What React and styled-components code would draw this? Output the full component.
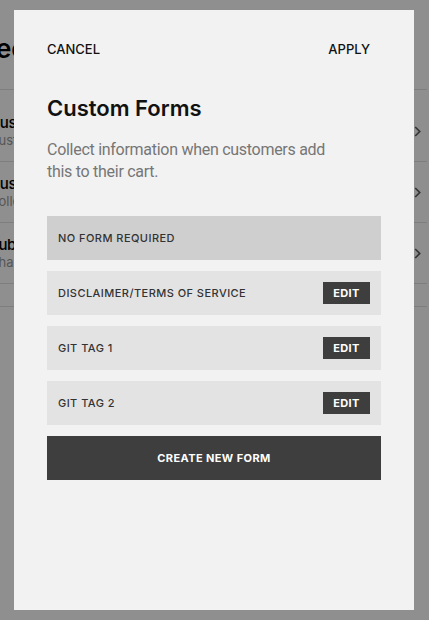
import React from 'react';
import styled, {createGlobalStyle} from 'styled-components';

const GlobalStyle = createGlobalStyle`
  html, body {
    margin: 0;
    padding: 0;
    background: #fff;
    overflow: hidden;
  }
  body {
    font-family: Inter, "Liberation Sans", sans-serif;
    -webkit-font-smoothing: antialiased;
  }
  * { box-sizing: border-box; }
`;

const forms = [
    {id: 'none', label: 'No form required', selected: true},
    {id: 'terms', label: 'Disclaimer/Terms of Service'},
    {id: 'tag1', label: 'Git Tag 1'},
    {id: 'tag2', label: 'Git Tag 2'},
];

const settings = [
    {title: 'Custom Forms', note: 'Customize what buyers tell you'},
    {title: 'Customer Notes', note: 'Collect extra details'},
    {title: 'Subscriptions', note: 'Charge on a schedule'},
];

function Chevron() {
    return (
        <svg width="7" height="11" viewBox="0 0 7 11" fill="none">
            <path d="M1.2 1l4.5 4.5-4.5 4.5" stroke="#5e5e5e" strokeWidth="1.7" />
        </svg>
    );
}

export default function App() {
    return (
        <React.Fragment>
            <GlobalStyle />
            <Page>
                <PageHeader>
                    <PageTitle>Sections</PageTitle>
                </PageHeader>
                <SettingsList>
                    {settings.map((s) => (
                        <SettingRow key={s.title}>
                            <SettingText>
                                <SettingTitle>{s.title}</SettingTitle>
                                <SettingNote>{s.note}</SettingNote>
                            </SettingText>
                            <Chevron />
                        </SettingRow>
                    ))}
                    <Divider />
                </SettingsList>
            </Page>

            <Overlay>
                <Modal>
                    <ModalBar>
                        <BarButton>Cancel</BarButton>
                        <BarButton>Apply</BarButton>
                    </ModalBar>

                    <Title>Custom Forms</Title>
                    <Lead>Collect information when customers add this to their cart.</Lead>

                    <FormList>
                        {forms.map((f) => (
                            <FormRow key={f.id} selected={f.selected}>
                                <FormLabel>{f.label}</FormLabel>
                                {!f.selected && <EditButton>Edit</EditButton>}
                            </FormRow>
                        ))}
                        <CreateButton>Create New Form</CreateButton>
                    </FormList>
                </Modal>
            </Overlay>
        </React.Fragment>
    );
}

/* page behind the dialog */
const Page = styled.div`
    margin: 0 2px 0 -11px;
    color: #000;
`;

const PageHeader = styled.div`
    height: 90px;
    padding-top: 33px;
    border-bottom: 1px solid #e0e0e0;
`;

const PageTitle = styled.h1`
    margin: 0 0 0 -10px;
    font-size: 26px;
    line-height: 32px;
    font-weight: 600;
`;

const SettingsList = styled.div`
    padding-top: 11px;
`;

const SettingRow = styled.div`
    display: flex;
    align-items: center;
    justify-content: space-between;
    height: 61px;
    padding: 0 6px 0 0;
    border-bottom: 1px solid #e0e0e0;
`;

const SettingText = styled.div`
    display: flex;
    flex-direction: column;
`;

const SettingTitle = styled.span`
    font-size: 15px;
    line-height: 18px;
    font-weight: 500;
    letter-spacing: -0.3px;
`;

const SettingNote = styled.span`
    font-size: 13px;
    line-height: 17px;
    color: #9a9a9a;
`;

const Divider = styled.div`
    height: 23px;
    border-bottom: 1px solid #e0e0e0;
`;

/* dialog */
const Overlay = styled.div`
    position: fixed;
    inset: 0;
    padding: 10px 15px 10px 14px;
    background: rgba(0, 0, 0, 0.44);
    display: flex;
    align-items: center;
    justify-content: center;
`;

const Modal = styled.div`
    width: 400px;
    height: 600px;
    background: #f2f2f2;
    padding: 31px 33px;
    display: flex;
    flex-direction: column;
`;

const ModalBar = styled.div`
    display: flex;
    justify-content: space-between;
    align-items: center;
    height: 16px;
    padding-right: 11px;
`;

const BarButton = styled.button`
    border: 0;
    background: none;
    padding: 0;
    font-family: inherit;
    font-size: 13px;
    line-height: 16px;
    font-weight: 500;
    letter-spacing: 0;
    text-transform: uppercase;
    color: #111;
    cursor: pointer;
`;

const Title = styled.h2`
    margin: 37px 0 0;
    font-size: 22px;
    line-height: 28px;
    font-weight: 600;
    color: #111;
`;

const Lead = styled.p`
    margin: 17px 0 0;
    max-width: 300px;
    font-family: Roboto, "Liberation Sans", sans-serif;
    font-size: 16px;
    line-height: 22px;
    letter-spacing: -0.28px;
    color: #767676;
`;

const FormList = styled.div`
    margin-top: 33px;
    display: flex;
    flex-direction: column;
    gap: 11px;
`;

const FormRow = styled.div`
    display: flex;
    align-items: center;
    justify-content: space-between;
    height: 44px;
    padding: 0 11px;
    background: ${(p) => (p.selected ? '#cfcfcf' : '#e3e3e3')};
`;

const FormLabel = styled.span`
    font-size: 11px;
    font-weight: 500;
    letter-spacing: 0.45px;
    text-transform: uppercase;
    color: #333;
`;

const EditButton = styled.button`
    width: 47px;
    height: 22px;
    border: 0;
    padding: 0;
    background: #3e3e3e;
    color: #fff;
    font-family: inherit;
    font-size: 11px;
    font-weight: 700;
    letter-spacing: 0.3px;
    text-transform: uppercase;
`;

const CreateButton = styled.button`
    height: 44px;
    border: 0;
    background: #3e3e3e;
    color: #fff;
    font-family: inherit;
    font-size: 11px;
    font-weight: 700;
    letter-spacing: 0.4px;
    text-transform: uppercase;
`;
